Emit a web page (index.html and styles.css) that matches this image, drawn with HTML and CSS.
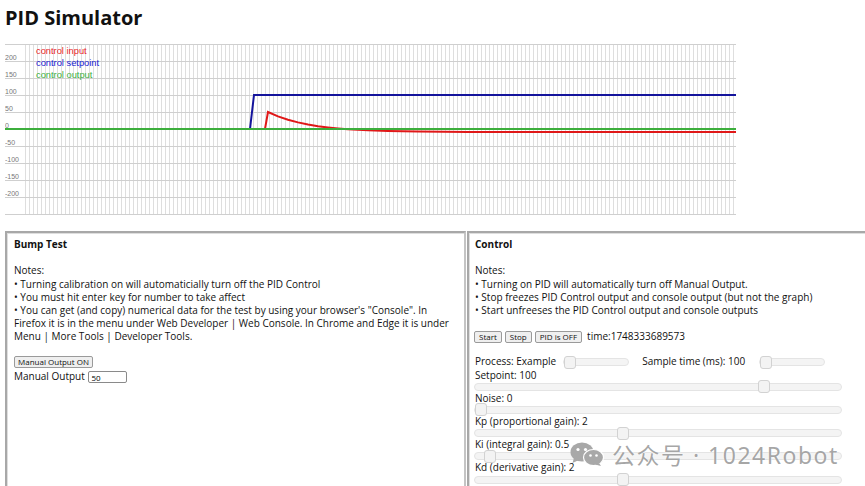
FILE: index.html
```html
<!DOCTYPE html>
<html lang="en">
<head>
    <meta charset="UTF-8">
    <meta name="viewport" content="width=device-width, initial-scale=1.0">
    <title>PID Simulator</title>
    <link rel="stylesheet" href="styles.css">
</head>
<body>
    <h1>PID Simulator</h1>

    <!-- graph: grid, axis labels, legend and the three traces -->
    <svg class="graph" width="731" height="173" viewBox="0 0 731 173">
        <defs>
            <pattern id="vgrid" x="20" y="0" width="4" height="173" patternUnits="userSpaceOnUse">
                <line x1="0.5" y1="0" x2="0.5" y2="173" stroke="#dedede" stroke-width="1"/>
            </pattern>
        </defs>
        <rect x="20" y="1" width="711" height="171" fill="url(#vgrid)"/>
        <g stroke="#cfcfcf" stroke-width="1">
            <line x1="0" y1="1.5" x2="731" y2="1.5"/>
            <line x1="0" y1="18.5" x2="731" y2="18.5"/>
            <line x1="0" y1="35.5" x2="731" y2="35.5"/>
            <line x1="0" y1="52.5" x2="731" y2="52.5"/>
            <line x1="0" y1="69.5" x2="731" y2="69.5"/>
            <line x1="0" y1="86.5" x2="731" y2="86.5"/>
            <line x1="0" y1="103.5" x2="731" y2="103.5"/>
            <line x1="0" y1="120.5" x2="731" y2="120.5"/>
            <line x1="0" y1="137.5" x2="731" y2="137.5"/>
            <line x1="0" y1="154.5" x2="731" y2="154.5"/>
            <line x1="0" y1="171.5" x2="731" y2="171.5"/>
        </g>
        <g class="axis">
            <text x="0" y="17">200</text>
            <text x="0" y="34">150</text>
            <text x="0" y="51">100</text>
            <text x="0" y="68">50</text>
            <text x="0" y="85">0</text>
            <text x="0" y="102">-50</text>
            <text x="0" y="119">-100</text>
            <text x="0" y="136">-150</text>
            <text x="0" y="153">-200</text>
        </g>
        <g class="legend">
            <text x="31" y="10.5" fill="#e8262a">control input</text>
            <text x="31" y="22.5" fill="#2020d0">control setpoint</text>
            <text x="31" y="34.5" fill="#3cb043">control output</text>
        </g>
        <polyline fill="none" stroke="#14149c" stroke-width="2"
            points="0,86 245,86 249,52 731,52"/>
        <polyline fill="none" stroke="#e01818" stroke-width="2"
            points="0,86 260,86 263,69 273,73.4 283,76.8 293,79.4 303,81.5 313,83.2 323,84.4 333,85.4 343,86.2 363,87.3 383,88 413,88.5 463,89 731,89"/>
        <polyline fill="none" stroke="#3cae3c" stroke-width="2"
            points="0,86 731,86"/>
    </svg>

    <div class="panels">
        <div class="panel">
            <b class="panel-title">Bump Test</b>
            <div class="notes">
                Notes:<br>
                &bull; Turning calibration on will automaticially turn off the PID Control<br>
                &bull; You must hit enter key for number to take affect<br>
                &bull; You can get (and copy) numerical data for the test by using your browser's "Console". In Firefox it is in the menu under Web Developer | Web Console. In Chrome and Edge it is under Menu | More Tools | Developer Tools.
            </div>
            <div class="manual">
                <button class="btn">Manual Output ON</button>
                <div class="manual-row">
                    Manual Output <input type="text" class="num-input" value="50">
                </div>
            </div>
        </div>

        <div class="panel panel-control">
            <b class="panel-title">Control</b>
            <div class="notes">
                Notes:<br>
                &bull; Turning on PID will automatically turn off Manual Output.<br>
                &bull; Stop freezes PID Control output and console output (but not the graph)<br>
                &bull; Start unfreeses the PID Control output and console outputs
            </div>
            <div class="btn-row">
                <button class="btn">Start</button>
                <button class="btn">Stop</button>
                <button class="btn">PID is OFF</button>
                <span class="time">time:1748333689573</span>
            </div>
            <div class="process-row">
                <span>Process: Example</span>
                <input type="range" class="slider slider-short" min="0" max="3" value="0">
                <span>Sample time (ms): 100</span>
                <input type="range" class="slider slider-short" min="100" max="1000" value="100">
            </div>
            <div class="field">Setpoint: 100</div>
            <input type="range" class="slider" min="-300" max="200" value="100">
            <div class="field">Noise: 0</div>
            <input type="range" class="slider" min="0" max="10" value="0">
            <div class="field">Kp (proportional gain): 2</div>
            <input type="range" class="slider" min="0" max="5" step="0.1" value="2">
            <div class="field">Ki (integral gain): 0.5</div>
            <input type="range" class="slider" min="0" max="20" step="0.5" value="0.5">
            <div class="field">Kd (derivative gain): 2</div>
            <input type="range" class="slider" min="0" max="5" step="0.1" value="2">
        </div>
    </div>

    <div class="watermark">
        <svg class="wm-icon" width="34" height="24" viewBox="0 0 34 24">
            <ellipse cx="12" cy="10" rx="11.5" ry="9.5" fill="#a8a8a8"/>
            <path d="M4 16 L2.5 21 L9 18 Z" fill="#a8a8a8"/>
            <circle cx="8" cy="7.5" r="1.6" fill="#fff"/>
            <circle cx="15.5" cy="7.5" r="1.6" fill="#fff"/>
            <ellipse cx="23.5" cy="15.5" rx="10" ry="8" fill="#a8a8a8" stroke="#fff" stroke-width="1.2"/>
            <path d="M29 21 L31 24 L25 22.5 Z" fill="#a8a8a8"/>
            <circle cx="20.5" cy="13.5" r="1.3" fill="#fff"/>
            <circle cx="26.5" cy="13.5" r="1.3" fill="#fff"/>
        </svg>
        <span class="wm-text">公众号 · 1024Robot</span>
    </div>
</body>
</html>
```

FILE: styles.css
```css
* {
    box-sizing: border-box;
}

body {
    font-family: "Open Sans", "Noto Sans", sans-serif;
    margin: 5px 0 0 5px;
    color: #111;
    overflow: hidden;
}

h1 {
    font-size: 20px;
    font-weight: 700;
    line-height: 26px;
    margin: 0;
}

.graph {
    display: block;
    margin-top: 12px;
}

.graph .axis text {
    font-family: "Liberation Sans", Arial, sans-serif;
    font-size: 7px;
    fill: #777;
}

.graph .legend text {
    font-family: "Liberation Sans", Arial, sans-serif;
    font-size: 9.3px;
}

.panels {
    display: flex;
    gap: 1px;
    margin-top: 15px;
}

.panel {
    width: 461px;
    height: 270px;
    border: 2px solid #a8a8a8;
    border-right-color: #c4c4c4;
    box-shadow: inset 1px 1px 0 #dedede;
    padding: 5px 7px;
    font-size: 10px;
    line-height: 13.2px;
}

.panel-control {
    flex: 1;
    border-right: none;
    padding-left: 6px;
}

.panel-title {
    display: block;
    font-size: 10px;
    margin-bottom: 13.2px;
}

.manual {
    margin-top: 11px;
}

.btn {
    font-family: "Open Sans", sans-serif;
    font-size: 8px;
    line-height: 10px;
    height: 12px;
    padding: 0 3px;
    margin: 0;
    color: #111;
    background: #efefef;
    border: 1px solid #9a9a9a;
    border-radius: 2px;
    vertical-align: middle;
}

.manual-row {
    margin-top: 2px;
}

.num-input {
    width: 39px;
    height: 12px;
    font-family: "Open Sans", sans-serif;
    font-size: 8px;
    padding: 0 2px;
    margin: 0 0 0 1px;
    border: 1px solid #8a8a8a;
    border-radius: 2px;
    vertical-align: middle;
}

.btn-row {
    display: flex;
    align-items: center;
    gap: 3px;
    margin-top: 13px;
    margin-left: -1px;
}

.btn-row .btn {
    padding: 0 4px;
}

.time {
    margin-left: 2px;
}

.process-row {
    display: flex;
    align-items: center;
    margin-top: 12px;
}

.process-row .slider-short:first-of-type {
    margin: 0 13px 0 7px;
}

.process-row .slider-short {
    margin: 0 0 0 14px;
}

/* flat, pale range inputs */
.slider {
    -webkit-appearance: none;
    appearance: none;
    display: block;
    width: 368px;
    height: 8px;
    margin: 1px 0 1px -1px;
    background: #f4f4f4;
    border: 1px solid #e4e4e4;
    border-radius: 4px;
}

.slider-short {
    width: 66px;
    height: 8px;
    margin: 0;
}

.slider::-webkit-slider-thumb {
    -webkit-appearance: none;
    appearance: none;
    width: 12px;
    height: 13px;
    border-radius: 3px;
    background: #f3f3f3;
    border: 1px solid #d2d2d2;
}

.field {
    height: 13.2px;
}

.watermark {
    position: absolute;
    left: 570px;
    top: 437px;
    display: flex;
    align-items: center;
    gap: 8px;
    pointer-events: none;
}

.wm-text {
    font-family: "Noto Sans", "Noto Sans CJK SC", sans-serif;
    font-size: 23px;
    letter-spacing: 1.5px;
    color: rgba(150, 150, 150, 0.85);
    text-shadow: 0 0 2px #fff;
}
```
